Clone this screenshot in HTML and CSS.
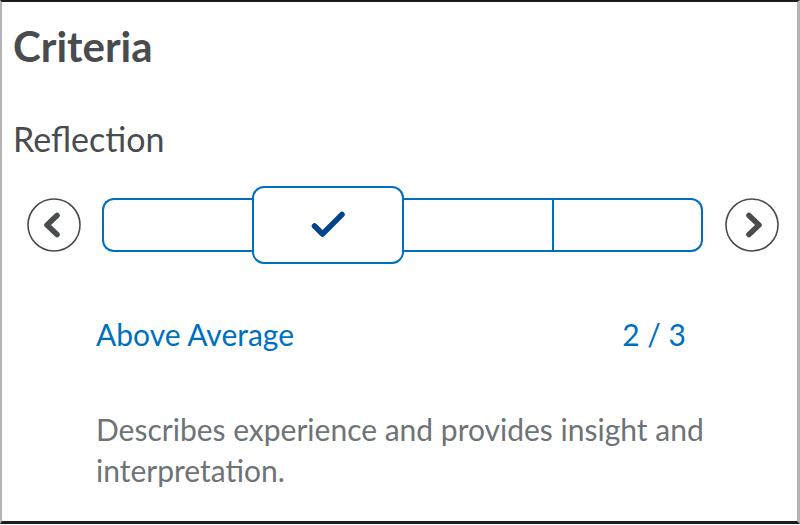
FILE: index.html
```html
<!DOCTYPE html>
<html lang="en">

<head>
    <meta charset="UTF-8">
    <meta name="viewport" content="width=device-width, initial-scale=1.0">
    <title>Criteria</title>
    <link rel="stylesheet" href="styles.css">
</head>

<body>
    <div class="panel">
        <h1 class="title">Criteria</h1>
        <h2 class="criterion">Reflection</h2>

        <div class="slider">
            <button class="nav-btn" aria-label="Previous level">
                <svg width="54" height="54" viewBox="0 0 54 54">
                    <circle cx="27" cy="27" r="26" fill="none" stroke="#4a4a4a" stroke-width="1.6"/>
                    <path d="M30 17.5 L20 27 L30 36.5" fill="none" stroke="#494c4e" stroke-width="5.5" stroke-linecap="round" stroke-linejoin="round"/>
                </svg>
            </button>

            <div class="levels">
                <div class="level first"></div>
                <div class="level selected">
                    <svg width="38" height="30" viewBox="0 0 38 30">
                        <path d="M5.5 16 L13.5 24 L33 4.5" fill="none" stroke="#004489" stroke-width="5.5" stroke-linecap="round" stroke-linejoin="round"/>
                    </svg>
                </div>
                <div class="level divided"></div>
                <div class="level last"></div>
            </div>

            <button class="nav-btn" aria-label="Next level">
                <svg width="54" height="54" viewBox="0 0 54 54">
                    <circle cx="27" cy="27" r="26" fill="none" stroke="#4a4a4a" stroke-width="1.6"/>
                    <path d="M24 17.5 L34 27 L24 36.5" fill="none" stroke="#494c4e" stroke-width="5.5" stroke-linecap="round" stroke-linejoin="round"/>
                </svg>
            </button>
        </div>

        <div class="level-info">
            <span class="level-name">Above Average</span>
            <span class="level-count">2 / 3</span>
        </div>

        <p class="description">Describes experience and provides insight and interpretation.</p>
    </div>
</body>

</html>
```

FILE: styles.css
```css
body {
    margin: 0;
    font-family: 'Lato', 'Noto Sans', sans-serif;
    background-color: #fff;
}

.panel {
    width: 800px;
    height: 524px;
    box-sizing: border-box;
    border-top: 2px solid #1c1c1c;
    border-left: 2px solid #b4b4b4;
    border-right: 3px solid #b4b4b4;
    border-bottom: 3px solid #1c1c1c;
    padding-top: 19px;
    overflow: hidden;
}

.title {
    margin: 0;
    padding-left: 11px;
    font-size: 42px;
    line-height: 50px;
    font-weight: 700;
    color: #494c4e;
}

.criterion {
    margin: 48px 0 0;
    padding-left: 11px;
    font-size: 34px;
    line-height: 40px;
    font-weight: 400;
    color: #494c4e;
}

.slider {
    display: flex;
    align-items: center;
    margin-top: 27px;
    padding-left: 25px;
    height: 78px;
}

.nav-btn {
    width: 54px;
    height: 54px;
    padding: 0;
    border: none;
    background: none;
    display: flex;
}

.levels {
    display: flex;
    align-items: center;
    margin: 0 22px 0 21px;
}

.level {
    width: 150px;
    height: 54px;
    box-sizing: border-box;
    border-top: 2px solid #006fbf;
    border-bottom: 2px solid #006fbf;
}

.level.first {
    border-left: 2px solid #006fbf;
    border-radius: 12px 0 0 12px;
}

.level.selected {
    width: 152px;
    height: 78px;
    border: 2px solid #006fbf;
    border-radius: 12px;
    display: flex;
    align-items: center;
    justify-content: center;
    background-color: #fff;
}

.level.divided {
    width: 150px;
    border-right: 2px solid #006fbf;
}

.level.last {
    width: 149px;
    border-right: 2px solid #006fbf;
    border-radius: 0 12px 12px 0;
}

.level-info {
    display: flex;
    justify-content: space-between;
    margin-top: 52px;
    padding: 0 111px 0 94px;
    font-size: 30px;
    line-height: 36px;
    color: #006fbf;
}

.description {
    margin: 57px 0 0;
    padding-left: 94px;
    width: 640px;
    font-size: 30px;
    line-height: 41px;
    color: #6e7376;
}
```
